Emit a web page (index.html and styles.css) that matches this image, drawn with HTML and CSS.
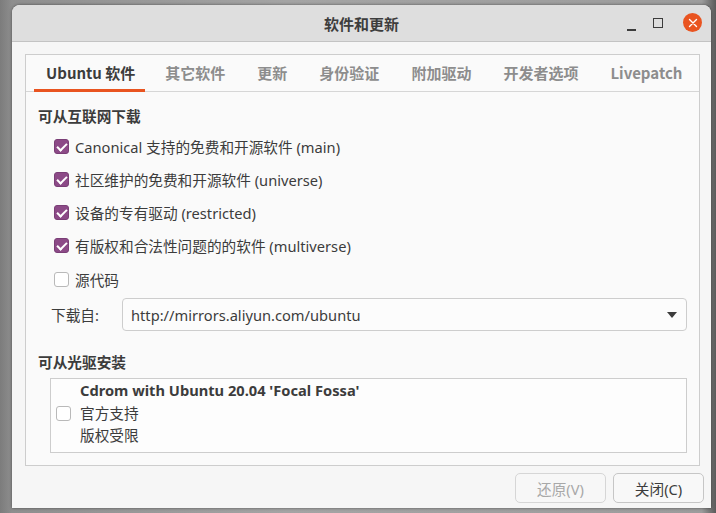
FILE: index.html
```html
<!DOCTYPE html>
<html>
  <head>
    <meta charset="utf-8">
    <link rel="stylesheet" href="styles.css">
  </head>
  <body>
    <div class="window">
      <!-- Title bar -->
      <div class="titlebar">
        <div class="title">软件和更新</div>
        <div class="controls">
          <span class="ctl-min"></span>
          <span class="ctl-max"></span>
          <span class="ctl-close">
            <svg width="10" height="10" viewBox="0 0 10 10">
              <path d="M1.5 1.5 L8.5 8.5 M8.5 1.5 L1.5 8.5" stroke="#fff" stroke-width="1.4" stroke-linecap="round"/>
            </svg>
          </span>
        </div>
      </div>

      <div class="body">
        <!-- Notebook -->
        <div class="notebook">
          <div class="tabs">
            <div class="tab active">Ubuntu 软件</div>
            <div class="tab">其它软件</div>
            <div class="tab">更新</div>
            <div class="tab">身份验证</div>
            <div class="tab">附加驱动</div>
            <div class="tab">开发者选项</div>
            <div class="tab">Livepatch</div>
          </div>

          <div class="page">
            <div class="section-title">可从互联网下载</div>
            <div class="checks">
              <label class="check"><span class="box on"></span>Canonical 支持的免费和开源软件 (main)</label>
              <label class="check"><span class="box on"></span>社区维护的免费和开源软件 (universe)</label>
              <label class="check"><span class="box on"></span>设备的专有驱动 (restricted)</label>
              <label class="check"><span class="box on"></span>有版权和合法性问题的的软件 (multiverse)</label>
              <label class="check"><span class="box"></span>源代码</label>
            </div>

            <div class="source-row">
              <span class="source-label">下载自:</span>
              <div class="combo">
                <span>http://mirrors.aliyun.com/ubuntu</span>
                <span class="arrow"></span>
              </div>
            </div>

            <div class="section-title cd">可从光驱安装</div>
            <div class="cd-list">
              <span class="box"></span>
              <div class="cd-text">
                <div class="cd-name">Cdrom with Ubuntu 20.04 'Focal Fossa'</div>
                <div>官方支持</div>
                <div>版权受限</div>
              </div>
            </div>
          </div>
        </div>

        <!-- Dialog buttons -->
        <div class="actions">
          <div class="btn disabled">还原(V)</div>
          <div class="btn">关闭(C)</div>
        </div>
      </div>
    </div>
  </body>
</html>
```

FILE: styles.css
```css
* {
  margin: 0;
  padding: 0;
  box-sizing: border-box;
}

body {
  width: 716px;
  height: 513px;
  overflow: hidden;
  background: linear-gradient(90deg, #7c7c7c 0px, #8e8e8e 12px, #a4a4a4 40%, #9c9c9c 98%, #5a5a5a 100%);
  font-family: "Noto Sans", "Noto Sans CJK SC", sans-serif;
  font-size: 14.67px;
  color: #3c3c3c;
  padding: 5px 0 0 12px;
}

.window {
  width: 699px;
  height: 503px;
  background: #f6f6f6;
  border-radius: 8px 8px 0 0;
  box-shadow: 0 0 3px rgba(0, 0, 0, 0.5);
  display: flex;
  flex-direction: column;
}

.titlebar {
  height: 37px;
  background: #dedede;
  border-radius: 8px 8px 0 0;
  border-bottom: 1px solid #c3c3c3;
  position: relative;
  display: flex;
  align-items: center;
  justify-content: center;
}

.title {
  font-family: "Noto Sans CJK SC", sans-serif;
  font-weight: 700;
  font-size: 15px;
  color: #3d3d3d;
}

.controls {
  position: absolute;
  right: 9px;
  top: 8px;
  display: flex;
  align-items: center;
}

.ctl-min {
  width: 9px;
  height: 2px;
  background: #3c3c3c;
  margin: 14px 17px 0 0;
}

.ctl-max {
  width: 10px;
  height: 10px;
  border: 1.5px solid #3c3c3c;
  margin-right: 20px;
}

.ctl-close {
  width: 19px;
  height: 19px;
  border-radius: 50%;
  background: #e95420;
  display: flex;
  align-items: center;
  justify-content: center;
}

.body {
  flex: 1;
  padding: 12px 11px 0 13px;
  display: flex;
  flex-direction: column;
}

.notebook {
  height: 412px;
  border: 1px solid #cdcdcd;
  background: #fafafa;
  display: flex;
  flex-direction: column;
}

.tabs {
  height: 37px;
  border-bottom: 1px solid #d6d6d6;
  display: flex;
  padding-left: 8px;
  gap: 8px;
}

.tab {
  padding: 0 12px;
  display: flex;
  align-items: center;
  font-family: "Noto Sans CJK SC", sans-serif;
  font-weight: 700;
  font-size: 15px;
  color: #8d8d8d;
  border-bottom: 3px solid transparent;
  margin-bottom: -1px;
  padding-top: 1px;
}

.tab.active {
  color: #3c3c3c;
  border-bottom-color: #e95420;
  padding-right: 10px;
}

.page {
  padding: 14px 12px 0 12px;
  color: #3c3c3c;
}

.section-title {
  font-family: "Noto Sans CJK SC", sans-serif;
  font-weight: 700;
  font-size: 14.67px;
  line-height: 20px;
}

.checks {
  padding: 10px 0 0 16px;
  display: flex;
  flex-direction: column;
  gap: 13.3px;
}

.check {
  display: flex;
  align-items: center;
  gap: 6px;
  height: 20px;
}

.box {
  width: 15px;
  height: 15px;
  border: 1px solid #b9b9b9;
  border-radius: 3px;
  background: #fff;
  flex-shrink: 0;
  position: relative;
}

.box.on {
  background: #8c4a87;
  border-color: #7a3e76;
}

.box.on::after {
  content: "";
  position: absolute;
  left: 4px;
  top: 1px;
  width: 4px;
  height: 8px;
  border: solid #fff;
  border-width: 0 2px 2px 0;
  transform: rotate(45deg);
}

.source-row {
  display: flex;
  align-items: center;
  margin: 9px 0 0 13px;
}

.source-label {
  width: 71px;
}

.combo {
  flex: 1;
  height: 33px;
  border: 1px solid #cdcdcd;
  border-radius: 4px;
  background: #fcfcfc;
  display: flex;
  align-items: center;
  justify-content: space-between;
  padding: 0 9px 0 8px;
}

.arrow {
  width: 0;
  height: 0;
  border-left: 5px solid transparent;
  border-right: 5px solid transparent;
  border-top: 6px solid #3c3c3c;
}

.section-title.cd {
  margin-top: 21px;
}

.cd-list {
  margin: 6px 0 0 12px;
  height: 75px;
  border: 1px solid #cdcdcd;
  background: #fdfdfd;
  display: flex;
  align-items: center;
  padding: 0 0 5px 5px;
  gap: 9px;
}

.cd-text {
  line-height: 22.5px;
}

.cd-name {
  font-weight: 700;
}

.actions {
  display: flex;
  justify-content: flex-end;
  gap: 7px;
  padding-top: 7px;
  margin-right: -4px;
}

.btn {
  width: 91px;
  height: 30px;
  border: 1px solid #c6c6c6;
  border-radius: 5px;
  background: #f8f8f8;
  display: flex;
  align-items: center;
  justify-content: center;
  color: #3c3c3c;
}

.btn.disabled {
  color: #a8a8a8;
  border-color: #d6d6d6;
  background: #f7f7f7;
}
```
